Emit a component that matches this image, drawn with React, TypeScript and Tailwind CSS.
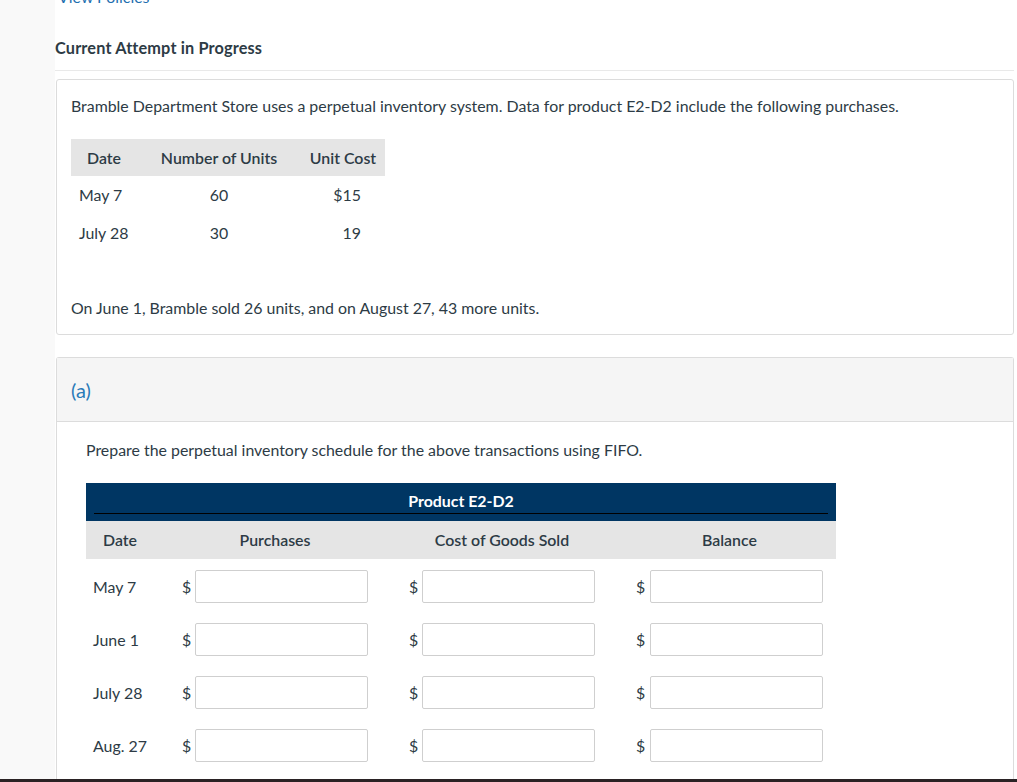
import React from "react";

const purchases = [
  { date: "May 7", units: "60", cost: "$15" },
  { date: "July 28", units: "30", cost: "19" },
];

const scheduleRows = ["May 7", "June 1", "July 28", "Aug. 27"];

function MoneyInput({ last }: { last?: boolean }) {
  return (
    <div className={`flex items-center pl-[10px] ${last ? "pr-[13px]" : "pr-[31px]"}`}>
      <span className="w-[14px]">$</span>
      <input
        className="h-[33px] w-[173px] rounded-[2px] border border-[#cfcfcf] bg-white px-2 outline-none"
        type="text"
      />
    </div>
  );
}

export default function App() {
  return (
    <div
      className="flex min-h-screen bg-white text-[15.9px] leading-[20px] text-[#2d3b45]"
      style={{ fontFamily: "Lato, 'Open Sans', sans-serif" }}
    >
      <div className="w-[55px] shrink-0 bg-[#f9f9f9]" />

      <main className="flex-1 pr-[3px]">
        <div className="-mt-[13px] pl-[3px] text-[#1f6fb0]">View Policies</div>

        <div className="mt-[31px] border-b border-[#e9e9e9] pb-[12px]">
          <h2 className="text-[16.3px] font-bold tracking-[0.15px] text-[#2d3b45]">Current Attempt in Progress</h2>
        </div>

        <section className="ml-[1px] mt-[8px] rounded-[3px] border border-[#dcdcdc] pl-[14px] pr-4 pt-[16px] pb-[16px]">
          <p>
            Bramble Department Store uses a perpetual inventory system. Data for product E2-D2 include the
            following purchases.
          </p>

          <div className="mt-[23px] w-[314px]">
            <div className="grid h-[37px] grid-cols-[66px_164px_84px] items-center bg-[#e5e5e5] font-semibold">
              <div className="text-center">Date</div>
              <div className="text-center">Number of Units</div>
              <div className="text-center">Unit Cost</div>
            </div>
            {purchases.map((row) => (
              <div key={row.date} className="grid h-[38px] grid-cols-[66px_164px_84px] items-center">
                <div className="pl-[8px]">{row.date}</div>
                <div className="text-center">{row.units}</div>
                <div className="pr-[24px] text-right">{row.cost}</div>
              </div>
            ))}
          </div>

          <p className="mt-[46px]">On June 1, Bramble sold 26 units, and on August 27, 43 more units.</p>
        </section>

        <section className="ml-[1px] mt-[22px] min-h-[430px] rounded-t-[3px] border border-b-0 border-[#dcdcdc]">
          <div className="flex h-[64px] items-center border-b border-[#dcdcdc] bg-[#f5f5f5] pl-[14px]">
            <span className="text-[20px] text-[#2a7ab8]">(a)</span>
          </div>

          <div className="pl-[29px] pt-[18px]">
            <p>Prepare the perpetual inventory schedule for the above transactions using FIFO.</p>

            <div className="mt-[23px] w-[750px]">
              <div className="h-[38px] bg-[#003663] px-[8px] pt-[8px]">
                <div className="border-b border-black pb-[2px] text-center font-bold text-white">
                  Product E2-D2
                </div>
              </div>

              <div className="grid h-[38px] grid-cols-[86px_227px_227px_210px] items-center bg-[#e5e5e5] font-semibold">
                <div className="pl-[17px]">Date</div>
                <div className="pl-[10px] pr-[31px] text-center">Purchases</div>
                <div className="pl-[10px] pr-[31px] text-center">Cost of Goods Sold</div>
                <div className="pl-[10px] pr-[13px] text-center">Balance</div>
              </div>

              <div className="pt-[1px]">
                {scheduleRows.map((date) => (
                  <div key={date} className="grid h-[53px] grid-cols-[86px_227px_227px_210px] items-center">
                    <div className="pl-[7px]">{date}</div>
                    <MoneyInput />
                    <MoneyInput />
                    <MoneyInput last />
                  </div>
                ))}
              </div>
            </div>
          </div>
        </section>
      </main>

      <div className="fixed bottom-0 left-0 right-0 h-[3px] bg-[#2a2224]" />
    </div>
  );
}
